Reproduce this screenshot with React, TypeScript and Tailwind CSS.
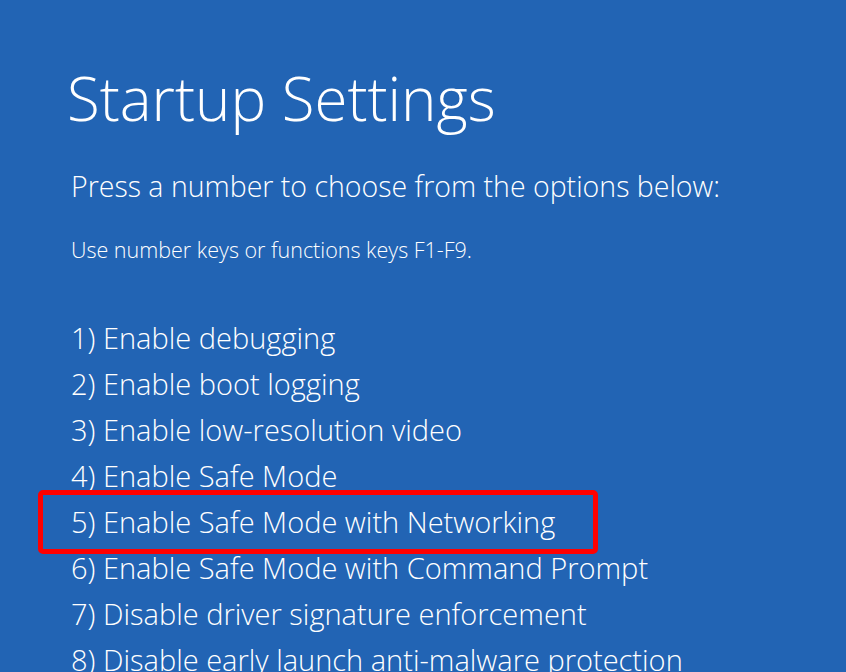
const OPTIONS = [
  "1) Enable debugging",
  "2) Enable boot logging",
  "3) Enable low-resolution video",
  "4) Enable Safe Mode",
  "5) Enable Safe Mode with Networking",
  "6) Enable Safe Mode with Command Prompt",
  "7) Disable driver signature enforcement",
  "8) Disable early launch anti-malware protection",
];

export default function App() {
  return (
    <div
      className="w-[846px] h-[672px] overflow-hidden bg-[#2264b4] text-white font-light"
      style={{ fontFamily: '"Open Sans", "Noto Sans", sans-serif' }}
    >
      <div className="pl-[71px] pt-[62px]">
        <h1 className="text-[60px] leading-[72px] -ml-[4px]">Startup Settings</h1>
        <p className="mt-[35px] text-[28.5px] leading-[34px]">Press a number to choose from the options below:</p>
        <p className="mt-[35px] text-[21.5px] leading-[24px]">Use number keys or functions keys F1-F9.</p>
        <ul className="mt-[53px] flex flex-col">
          {OPTIONS.map((o, i) => (
            <li key={i} className="relative text-[29px] leading-[46px] whitespace-nowrap">
              {o}
              {i === 4 && (
                <span className="absolute left-[-33px] top-[-9px] w-[560px] h-[64px] border-[5px] border-[#ff0000] rounded-[5px]" />
              )}
            </li>
          ))}
        </ul>
      </div>
    </div>
  );
}
